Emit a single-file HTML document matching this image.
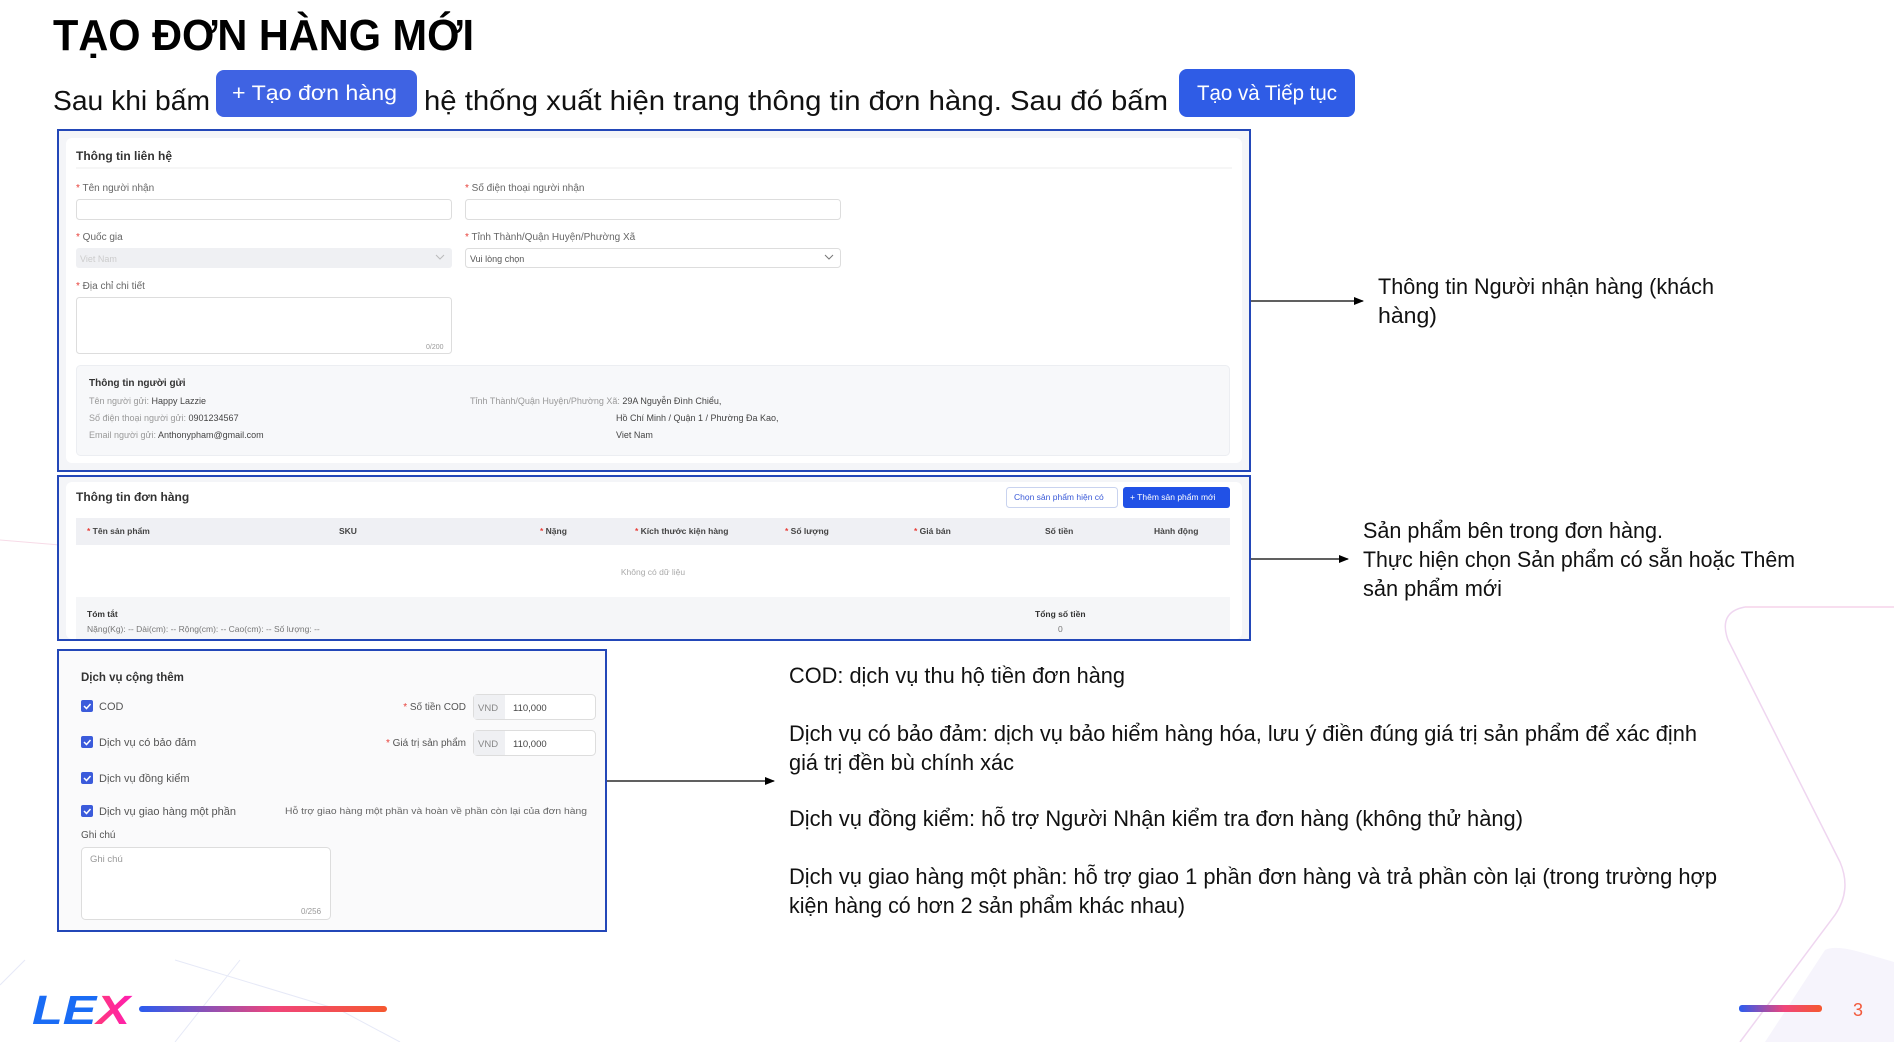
<!DOCTYPE html>
<html><head><meta charset="utf-8"><style>
html,body{margin:0;padding:0;background:#fff;}
svg{display:block;font-family:"Liberation Sans",sans-serif;}
.s{font-size:10px;fill:#666;}
.d{fill:#333;}
.r{fill:#e8403a;}
.big{font-family:"Liberation Sans",sans-serif;fill:#111;font-size:22px;}
</style></head><body>
<svg width="1894" height="1042" viewBox="0 0 1894 1042" xmlns="http://www.w3.org/2000/svg">
<defs>
<linearGradient id="g1" x1="0" x2="1"><stop offset="0" stop-color="#2a5cf0"/><stop offset="0.55" stop-color="#f0457a"/><stop offset="1" stop-color="#f5582f"/></linearGradient>
<linearGradient id="gx" x1="0" x2="1"><stop offset="0" stop-color="#ff6a1a"/><stop offset="1" stop-color="#ff1cb4"/></linearGradient>
<marker id="ah" markerWidth="10" markerHeight="8" refX="9" refY="4" orient="auto" markerUnits="userSpaceOnUse"><path d="M0,0 L10,4 L0,8 Z" fill="#000"/></marker>
</defs>
<!-- background decorations -->
<path d="M1745,607 L1894,607" stroke="#f6d3ea" stroke-width="1.5" fill="none"/>
<path d="M1745,607 Q1718,612 1728,640 L1840,862 Q1852,890 1835,915 L1740,1042" stroke="#efd6f0" stroke-width="1.5" fill="none"/>
<path d="M1825,950 Q1835,945 1860,952 L1894,962 L1894,1042 L1765,1042 Z" fill="#f6f4fc"/>
<path d="M0,540 L60,545" stroke="#f7dbe8" stroke-width="1" fill="none"/>
<path d="M0,985 L25,960 M175,1042 L240,960 M175,960 L340,1010 L400,1042" stroke="#e6e9f7" stroke-width="1" fill="none"/>
<!-- title -->
<text x="53" y="50" font-size="44" font-weight="bold" fill="#000" textLength="421" lengthAdjust="spacingAndGlyphs">TẠO ĐƠN HÀNG MỚI</text>
<text x="53" y="110" font-size="28" fill="#111" textLength="157" lengthAdjust="spacingAndGlyphs">Sau khi bấm</text>
<rect x="216" y="70" width="201" height="47" rx="8" fill="#3f63e3"/>
<text x="232" y="100" font-size="21" fill="#fff" textLength="165" lengthAdjust="spacingAndGlyphs">+ Tạo đơn hàng</text>
<text x="424" y="110" font-size="28" fill="#111" textLength="744" lengthAdjust="spacingAndGlyphs">hệ thống xuất hiện trang thông tin đơn hàng. Sau đó bấm</text>
<rect x="1179" y="69" width="176" height="48" rx="8" fill="#2f5ce6"/>
<text x="1197" y="100" font-size="21" fill="#fff" textLength="140" lengthAdjust="spacingAndGlyphs">Tạo và Tiếp tục</text>

<!-- Box 1 -->
<rect x="58" y="130" width="1192" height="341" fill="#f4f5f8" stroke="#2347b8" stroke-width="2"/>
<rect x="66" y="138" width="1176" height="325" rx="6" fill="#fff"/>
<text x="76" y="160" font-size="12" font-weight="bold" class="d">Thông tin liên hệ</text>
<line x1="76" y1="168" x2="1232" y2="168" stroke="#eee"/>
<text x="76" y="191" class="s"><tspan class="r">* </tspan>Tên người nhận</text>
<rect x="76.5" y="199.5" width="375" height="20" rx="3" fill="#fff" stroke="#ddd"/>
<text x="465" y="191" class="s"><tspan class="r">* </tspan>Số điện thoại người nhận</text>
<rect x="465.5" y="199.5" width="375" height="20" rx="3" fill="#fff" stroke="#ddd"/>
<text x="76" y="240" class="s"><tspan class="r">* </tspan>Quốc gia</text>
<rect x="76" y="248" width="376" height="20" rx="3" fill="#eff0f3"/>
<text x="80" y="262" font-size="9" fill="#ccc">Viet Nam</text>
<path d="M436,255 l4,4 l4,-4" stroke="#bbb" fill="none"/>
<text x="465" y="240" class="s"><tspan class="r">* </tspan>Tỉnh Thành/Quận Huyện/Phường Xã</text>
<rect x="465.5" y="248.5" width="375" height="19" rx="3" fill="#fff" stroke="#ddd"/>
<text x="470" y="262" font-size="9" fill="#555">Vui lòng chọn</text>
<path d="M825,255 l4,4 l4,-4" stroke="#777" fill="none"/>
<text x="76" y="289" class="s"><tspan class="r">* </tspan>Địa chỉ chi tiết</text>
<rect x="76.5" y="297.5" width="375" height="56" rx="3" fill="#fff" stroke="#ddd"/>
<text x="426" y="349" font-size="7" fill="#999">0/200</text>
<rect x="76.5" y="365.5" width="1153" height="90" rx="4" fill="#f7f8fa" stroke="#eceef2"/>
<text x="89" y="386" font-size="10" font-weight="bold" class="d">Thông tin người gửi</text>
<text x="89" y="404" font-size="9" fill="#999">Tên người gửi: <tspan fill="#444">Happy Lazzie</tspan></text>
<text x="89" y="421" font-size="9" fill="#999">Số điện thoại người gửi: <tspan fill="#444">0901234567</tspan></text>
<text x="89" y="438" font-size="9" fill="#999">Email người gửi: <tspan fill="#444">Anthonypham@gmail.com</tspan></text>
<text x="470" y="404" font-size="9" fill="#999">Tỉnh Thành/Quận Huyện/Phường Xã: <tspan fill="#444">29A Nguyễn Đình Chiểu,</tspan></text>
<text x="616" y="421" font-size="9" fill="#444">Hồ Chí Minh / Quận 1 / Phường Đa Kao,</text>
<text x="616" y="438" font-size="9" fill="#444">Viet Nam</text>

<!-- Box 2 -->
<rect x="58" y="476" width="1192" height="164" fill="#f4f5f8" stroke="#2347b8" stroke-width="2"/>
<rect x="66" y="482" width="1176" height="157" rx="6" fill="#fff"/>
<text x="76" y="501" font-size="12" font-weight="bold" class="d">Thông tin đơn hàng</text>
<rect x="1006.5" y="487.5" width="111" height="20" rx="3" fill="#fff" stroke="#c9d3ef"/>
<text x="1014" y="500" font-size="8.5" fill="#3a5ad8">Chọn sản phẩm hiện có</text>
<rect x="1123" y="487" width="107" height="21" rx="3" fill="#2151e6"/>
<text x="1130" y="500" font-size="8.5" fill="#fff">+ Thêm sản phẩm mới</text>
<rect x="76" y="518" width="1154" height="27" fill="#eff0f4"/>
<g font-size="8.5" font-weight="bold" fill="#444">
<text x="87" y="534"><tspan class="r">* </tspan>Tên sản phẩm</text>
<text x="339" y="534">SKU</text>
<text x="540" y="534"><tspan class="r">* </tspan>Nặng</text>
<text x="635" y="534"><tspan class="r">* </tspan>Kích thước kiện hàng</text>
<text x="785" y="534"><tspan class="r">* </tspan>Số lượng</text>
<text x="914" y="534"><tspan class="r">* </tspan>Giá bán</text>
<text x="1045" y="534">Số tiền</text>
<text x="1154" y="534">Hành động</text>
</g>
<text x="653" y="575" font-size="8.5" fill="#aaa" text-anchor="middle">Không có dữ liệu</text>
<rect x="76" y="597" width="1154" height="42" fill="#f5f6f8"/>
<text x="87" y="617" font-size="8.5" font-weight="bold" class="d">Tóm tắt</text>
<text x="87" y="632" font-size="8.5" fill="#777">Nặng(Kg): --    Dài(cm): --    Rộng(cm): --    Cao(cm): --    Số lượng: --</text>
<text x="1035" y="617" font-size="8.5" font-weight="bold" class="d">Tổng số tiền</text>
<text x="1058" y="632" font-size="8.5" fill="#777">0</text>

<!-- Box 3 -->
<rect x="58" y="650" width="548" height="281" fill="#fafafb" stroke="#2347b8" stroke-width="2"/>
<text x="81" y="681" font-size="11.5" font-weight="bold" class="d">Dịch vụ cộng thêm</text>
<g font-size="11" fill="#555">
<rect x="81" y="700" width="12" height="12" rx="2" fill="#3b5bdb"/><path d="M84,706 l2.5,2.5 l4,-4.5" stroke="#fff" stroke-width="1.5" fill="none"/>
<text x="99" y="710">COD</text>
<rect x="81" y="736" width="12" height="12" rx="2" fill="#3b5bdb"/><path d="M84,742 l2.5,2.5 l4,-4.5" stroke="#fff" stroke-width="1.5" fill="none"/>
<text x="99" y="746">Dịch vụ có bảo đảm</text>
<rect x="81" y="772" width="12" height="12" rx="2" fill="#3b5bdb"/><path d="M84,778 l2.5,2.5 l4,-4.5" stroke="#fff" stroke-width="1.5" fill="none"/>
<text x="99" y="782">Dịch vụ đồng kiểm</text>
<rect x="81" y="805" width="12" height="12" rx="2" fill="#3b5bdb"/><path d="M84,811 l2.5,2.5 l4,-4.5" stroke="#fff" stroke-width="1.5" fill="none"/>
<text x="99" y="815">Dịch vụ giao hàng một phần</text>
<text x="81" y="838" font-size="10">Ghi chú</text>
</g>
<text x="466" y="710" font-size="10" fill="#555" text-anchor="end"><tspan class="r">* </tspan>Số tiền COD</text>
<rect x="473.5" y="694.5" width="122" height="25" rx="4" fill="#fff" stroke="#ddd"/>
<rect x="474" y="695" width="31" height="24" fill="#eff0f3"/>
<text x="478" y="711" font-size="9.5" fill="#888">VND</text>
<text x="513" y="711" font-size="9.5" fill="#444">110,000</text>
<text x="466" y="746" font-size="10" fill="#555" text-anchor="end"><tspan class="r">* </tspan>Giá trị sản phẩm</text>
<rect x="473.5" y="730.5" width="122" height="25" rx="4" fill="#fff" stroke="#ddd"/>
<rect x="474" y="731" width="31" height="24" fill="#eff0f3"/>
<text x="478" y="747" font-size="9.5" fill="#888">VND</text>
<text x="513" y="747" font-size="9.5" fill="#444">110,000</text>
<text x="285" y="814" font-size="9.5" fill="#666" textLength="302" lengthAdjust="spacingAndGlyphs">Hỗ trợ giao hàng một phần và hoàn về phần còn lại của đơn hàng</text>
<rect x="81.5" y="847.5" width="249" height="72" rx="4" fill="#fff" stroke="#ddd"/>
<text x="90" y="862" font-size="9.5" fill="#999">Ghi chú</text>
<text x="301" y="914" font-size="8" fill="#999">0/256</text>

<!-- arrows -->
<line x1="1251" y1="301" x2="1363" y2="301" stroke="#000" stroke-width="1.2" marker-end="url(#ah)"/>
<line x1="1251" y1="559" x2="1348" y2="559" stroke="#000" stroke-width="1.2" marker-end="url(#ah)"/>
<line x1="607" y1="781" x2="774" y2="781" stroke="#000" stroke-width="1.2" marker-end="url(#ah)"/>

<!-- annotations -->
<g class="big">
<text x="1378" y="294" textLength="336" lengthAdjust="spacingAndGlyphs">Thông tin Người nhận hàng (khách</text>
<text x="1378" y="323" textLength="59" lengthAdjust="spacingAndGlyphs">hàng)</text>
<text x="1363" y="538" textLength="300" lengthAdjust="spacingAndGlyphs">Sản phẩm bên trong đơn hàng.</text>
<text x="1363" y="567" textLength="432" lengthAdjust="spacingAndGlyphs">Thực hiện chọn Sản phẩm có sẵn hoặc Thêm</text>
<text x="1363" y="596" textLength="139" lengthAdjust="spacingAndGlyphs">sản phẩm mới</text>
<text x="789" y="683" textLength="336" lengthAdjust="spacingAndGlyphs">COD: dịch vụ thu hộ tiền đơn hàng</text>
<text x="789" y="741" textLength="908" lengthAdjust="spacingAndGlyphs">Dịch vụ có bảo đảm: dịch vụ bảo hiểm hàng hóa, lưu ý điền đúng giá trị sản phẩm để xác định</text>
<text x="789" y="770" textLength="225" lengthAdjust="spacingAndGlyphs">giá trị đền bù chính xác</text>
<text x="789" y="826" textLength="734" lengthAdjust="spacingAndGlyphs">Dịch vụ đồng kiểm: hỗ trợ Người Nhận kiểm tra đơn hàng (không thử hàng)</text>
<text x="789" y="884" textLength="928" lengthAdjust="spacingAndGlyphs">Dịch vụ giao hàng một phần: hỗ trợ giao 1 phần đơn hàng và trả phần còn lại (trong trường hợp</text>
<text x="789" y="913" textLength="396" lengthAdjust="spacingAndGlyphs">kiện hàng có hơn 2 sản phẩm khác nhau)</text>
</g>

<!-- footer -->
<text x="32" y="1024" font-size="41" font-weight="bold" font-style="italic" textLength="98" lengthAdjust="spacingAndGlyphs"><tspan fill="#1a6cf5">LE</tspan><tspan fill="url(#gx)">X</tspan></text>
<rect x="139" y="1006" width="248" height="6" rx="3" fill="url(#g1)"/>
<rect x="1739" y="1005" width="83" height="7" rx="3" fill="url(#g1)"/>
<text x="1853" y="1016" font-size="18" fill="#f25a3c">3</text>
</svg>
</body></html>
